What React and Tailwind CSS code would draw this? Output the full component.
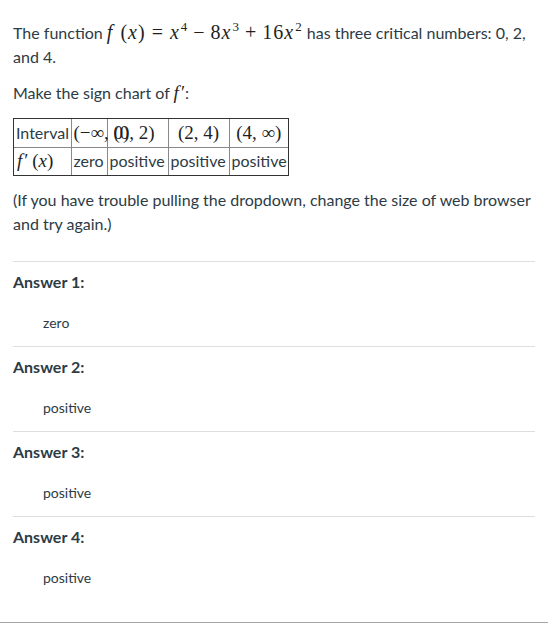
import React from "react";

const serif = "font-['Liberation_Serif','Times_New_Roman',serif]";

function V({ children, r = 0 }) {
    return <span className={r ? "italic pr-[2px]" : "italic"}>{children}</span>;
}

function Sup({ children }) {
    return <span className="relative -top-[8px] pl-[1px] text-[13px] leading-none">{children}</span>;
}

function Op({ children, rel }) {
    return <span className={rel ? "mx-[6px]" : "mx-[5px]"}>{children}</span>;
}

function M({ children, wide }) {
    return (
        <span
            className={`${serif} ${wide ? "text-[20px] tracking-[1px]" : "text-[19px]"} leading-none whitespace-nowrap text-[#1f1f1f]`}
        >
            {children}
        </span>
    );
}

export default function App() {
    const answers = ["zero", "positive", "positive", "positive"];

    return (
        <div className="min-h-[627px] bg-white font-['Lato','Noto_Sans',sans-serif] text-[#2d3b45]">
            <div className="border-b border-[#a5a5a5] px-[13px] pt-[21px] pb-[21px]">
                <p className="text-[16px] leading-[24px]">
                    The function{" "}
                    <M wide>
                        <V r={1}>f</V>&thinsp;(<V>x</V>)<Op rel>=</Op>
                        <V>x</V>
                        <Sup>4</Sup>
                        <Op>−</Op>8<V>x</V>
                        <Sup>3</Sup>
                        <Op>+</Op>16<V>x</V>
                        <Sup>2</Sup>
                    </M>{" "}
                    has three critical numbers: 0, 2, and 4.
                </p>

                <p className="mt-[12px] text-[16px] leading-[24px]">
                    Make the sign chart of{" "}
                    <M>
                        <V r={1}>f</V>′
                    </M>
                    :
                </p>

                <div className="mt-[13px] w-fit border border-[#333]">
                    <table className="w-[274px] table-fixed border-collapse text-[16px]">
                        <colgroup>
                            <col className="w-[57px]" />
                            <col className="w-[36px]" />
                            <col className="w-[61px]" />
                            <col className="w-[61px]" />
                            <col className="w-[59px]" />
                        </colgroup>
                        <tbody>
                            <tr className="h-[28px]">
                                <td className="whitespace-nowrap px-[2px]">Interval</td>
                                <td className="overflow-visible whitespace-nowrap border-l border-[#888] pl-[2px]">
                                    <M>(−∞, 0)</M>
                                </td>
                                <td className="whitespace-nowrap border-l border-[#888] pl-[6px]">
                                    <M>(0, 2)</M>
                                </td>
                                <td className="whitespace-nowrap border-l border-[#888] text-center">
                                    <M>(2, 4)</M>
                                </td>
                                <td className="whitespace-nowrap border-l border-[#888] text-center">
                                    <M>(4, ∞)</M>
                                </td>
                            </tr>
                            <tr className="h-[28px] border-t border-[#888]">
                                <td className="whitespace-nowrap px-[3px]">
                                    <M>
                                        <V r={1}>f</V>′&thinsp;(<V>x</V>)
                                    </M>
                                </td>
                                <td className="whitespace-nowrap border-l border-[#888] px-[2px]">zero</td>
                                <td className="whitespace-nowrap border-l border-[#888] px-[2px]">positive</td>
                                <td className="whitespace-nowrap border-l border-[#888] px-[2px]">positive</td>
                                <td className="whitespace-nowrap border-l border-[#888] px-[2px]">positive</td>
                            </tr>
                        </tbody>
                    </table>
                </div>

                <p className="mt-[12px] text-[16px] leading-[24px]">
                    (If you have trouble pulling the dropdown, change the size of web browser and try again.)
                </p>

                <div className="mt-[25px]">
                    {answers.map((a, i) => (
                        <div key={i} className="border-t border-[#dcdfe2] pt-[8px] pb-[13px]">
                            <p className="text-[16px] font-bold leading-[24px]">Answer {i + 1}:</p>
                            <p className="mt-[19px] pl-[30px] text-[14px] leading-[20px]">{a}</p>
                        </div>
                    ))}
                </div>
            </div>
        </div>
    );
}
